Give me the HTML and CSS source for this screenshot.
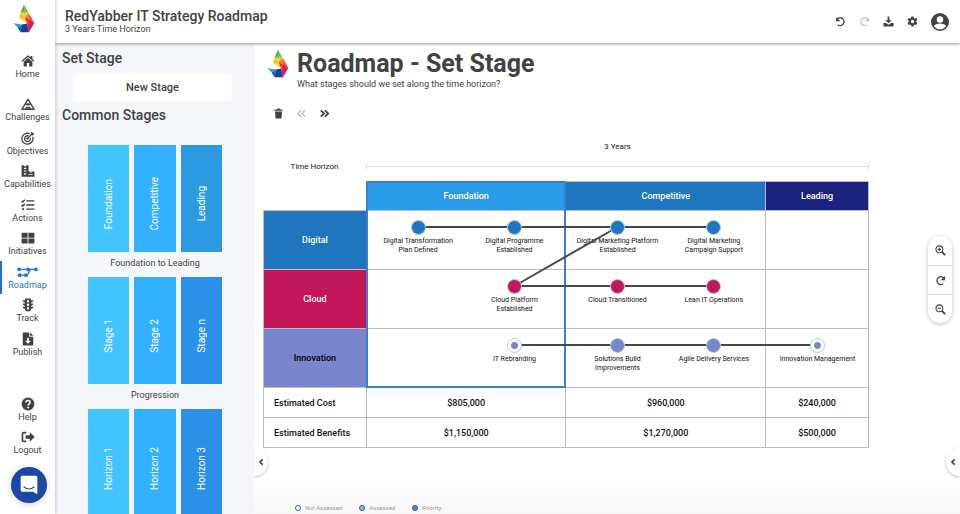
FILE: index.html
```html
<!DOCTYPE html>
<html lang="en">
<head>
    <meta charset="UTF-8">
    <meta name="viewport" content="width=device-width, initial-scale=1.0">
    <title>RedYabber IT Strategy Roadmap</title>
    <link rel="stylesheet" href="styles.css">
</head>
<body>
    <svg class="defs" width="0" height="0" aria-hidden="true">
        <symbol id="logo" viewBox="0 0 66 86">
            <path fill="#3fae49" d="M33 1 22 27 34 20z"/>
            <path fill="#5dbb46" d="M33 1 34 20 46 26z"/>
            <path fill="#8cc63f" d="M34 20 22 27 46 26z"/>
            <path fill="#ffd21f" d="M22 27 46 26 35 40z"/>
            <path fill="#fdb515" d="M22 27 19 42 35 40z"/>
            <path fill="#ffe11a" d="M19 42 35 40 42 57z"/>
            <path fill="#f58220" d="M46 26 35 40 49 44z"/>
            <path fill="#f0442e" d="M46 26 64 56 49 44z"/>
            <path fill="#ee2d3a" d="M35 40 49 44 42 57z"/>
            <path fill="#e0203c" d="M49 44 64 56 42 57z"/>
            <path fill="#d81b4a" d="M64 56 48 84 42 57z"/>
            <path fill="#2b9fe0" d="M1 57 27 61 14 70z"/>
            <path fill="#1763b8" d="M27 61 14 70 22 84z"/>
            <path fill="#1b3f94" d="M27 61 42 58 48 84 22 84z"/>
        </symbol>
        <symbol id="home" viewBox="0 0 24 24">
            <path d="M12 2 1 11.500l1.500 1.800L12 5.200l9.500 8.100 1.500-1.800-3.500-3V3.500h-3v2.400z"/>
            <path d="M12 7 4.500 13.400V21.500h5.500v-6h4v6h5.500v-8.100z"/>
        </symbol>
        <symbol id="challenges" viewBox="0 0 24 24">
            <path fill="none" stroke="currentColor" stroke-width="2.400" stroke-linejoin="round" d="M12 4 1.500 21h21zM8 11.500l2.500 2 1.500-2 1.500 2 2.500-2"/>
            <path d="m6 20 4.500-4 1.500 2 2-2 4 4z"/>
        </symbol>
        <symbol id="objectives" viewBox="0 0 24 24">
            <g fill="none" stroke="currentColor" stroke-width="2.200">
                <path d="M15 4.500A9.500 9.500 0 1 0 20 10"/>
                <path d="M13 8.500a5 5 0 1 0 3 3.500M11 13l10-10M18 2v4h4"/>
            </g>
            <circle cx="11" cy="13" r="2"/>
        </symbol>
        <symbol id="capabilities" viewBox="0 0 24 24">
            <path fill-rule="evenodd" d="M1 2h4v2h4V2h4v11h3v2h2v-2h5v9H1zM5 6.500v2h4v-2zM5 11v2h4v-2zM5 16v2h4v-2zM13 17.500v1.500h7v-1.500z"/>
        </symbol>
        <symbol id="actions" viewBox="0 0 24 24">
            <path fill="none" stroke="currentColor" stroke-width="2.400" d="M9 5h14M9 12h14M9 19h14M1 5l2 2 3.500-4M1 12l2 2 3.500-4"/>
            <circle cx="3.500" cy="19" r="1.900"/>
        </symbol>
        <symbol id="initiatives" viewBox="0 0 24 24">
            <path d="M1 3h10.300v8.500H1zM12.700 3H23v8.500H12.700zM1 12.800h10.300v8.500H1zM12.700 12.800H23v8.500H12.700z"/>
        </symbol>
        <symbol id="roadmap" viewBox="0 0 40 24">
            <path fill="none" stroke="currentColor" stroke-width="2.600" d="M4 7h32M5 18h12c7 0 4-8 9-11"/>
            <circle cx="4" cy="7" r="3.600"/><circle cx="21" cy="7" r="3.600"/><circle cx="36" cy="7" r="3.600"/>
            <circle cx="5" cy="18" r="3.600"/><circle cx="17" cy="18" r="3.600"/>
        </symbol>
        <symbol id="track" viewBox="0 0 24 24">
            <path fill-rule="evenodd" d="M7 1h10v3h4c0 2-1.500 3.500-4 4v1.500h4c0 2-1.500 3.500-4 4V15h4c0 2-1.500 3.500-4 4a5 4 0 0 1-10 0c-2.500-.5-4-2-4-4h4v-1.500c-2.500-.5-4-2-4-4h4V8C4.500 7.500 3 6 3 4h4zM12 3.500a2 2 0 1 0 0 4 2 2 0 0 0 0-4zM12 9.500a2 2 0 1 0 0 4 2 2 0 0 0 0-4zM12 15.500a2 2 0 1 0 0 4 2 2 0 0 0 0-4z"/>
        </symbol>
        <symbol id="publish" viewBox="0 0 24 24">
            <path fill-rule="evenodd" d="M3 1h11v7h7v15H3zM15.500 1 21 6.500h-5.500zM10.500 10v5H7l5 5 5-5h-3.500v-5z"/>
        </symbol>
        <symbol id="help" viewBox="0 0 24 24">
            <circle cx="12" cy="12" r="11"/>
            <path fill="none" stroke="#fff" stroke-width="2.600" d="M8.300 9.500c0-5 7.400-4.600 7.400-.5 0 2.700-3.500 2.700-3.500 5.500"/>
            <circle cx="12.200" cy="17.800" r="1.700" fill="#fff"/>
        </symbol>
        <symbol id="logout" viewBox="0 0 24 24">
            <path fill="none" stroke="currentColor" stroke-width="2.800" d="M9 4.500H4.500q-2 0-2 2v11q0 2 2 2H9"/>
            <path d="M15 4v5H8v6h7v5l8.500-8z"/>
        </symbol>
        <symbol id="rewind" viewBox="0 0 24 24">
            <path fill="none" stroke="currentColor" stroke-width="3" d="M5 6.500A8.500 8.500 0 1 1 6 19"/>
            <path d="M2 2v9.500h9.500z"/>
        </symbol>
        <symbol id="download" viewBox="0 0 24 24">
            <path d="M10 1h4v8h5l-7 7-7-7h5z"/>
            <path d="M1 15h5.500l5.500 4 5.500-4H23v8H1z"/>
        </symbol>
        <symbol id="settings" viewBox="0 0 24 24">
            <path fill-rule="evenodd" d="m9.500 1-.6 3.200-2 1.200-3.100-1.100-2.500 4.300L3.800 10.800v2.400l-2.500 2.200 2.500 4.300 3.100-1.100 2 1.200.6 3.200h5l.6-3.200 2-1.200 3.100 1.100 2.500-4.300-2.500-2.200v-2.400l2.500-2.200-2.500-4.300-3.100 1.100-2-1.200-.6-3.200zM12 8.300a3.700 3.700 0 1 1 0 7.400 3.700 3.700 0 0 1 0-7.400z"/>
        </symbol>
        <symbol id="account" viewBox="0 0 24 24">
            <circle cx="12" cy="12" r="12"/>
            <circle cx="12" cy="8.700" r="4.300" fill="#fff"/>
            <path fill="#fff" d="M3.800 17.500c2-4.500 14.400-4.500 16.400 0-4 5.500-12.400 5.500-16.400 0z"/>
        </symbol>
        <symbol id="trash" viewBox="0 0 24 24">
            <path d="M3 3h5l1.500-2h5L16 3h5v3H3zM4.500 7.500h15L18.500 23h-13z"/>
        </symbol>
        <symbol id="left" viewBox="0 0 24 24">
            <path fill="none" stroke="currentColor" stroke-width="3.500" d="m11 5-7 7 7 7M20 5l-7 7 7 7"/>
        </symbol>
        <symbol id="right" viewBox="0 0 24 24">
            <path fill="none" stroke="currentColor" stroke-width="4" d="m4 5 7 7-7 7M13 5l7 7-7 7"/>
        </symbol>
        <symbol id="chevron" viewBox="0 0 24 24">
            <path fill="none" stroke="currentColor" stroke-width="5" d="m17 4-8 8 8 8"/>
        </symbol>
        <symbol id="zoom-in" viewBox="0 0 24 24">
            <g fill="none" stroke="currentColor" stroke-width="2.400"><circle cx="9.500" cy="9.500" r="7.500"/><path d="M9.500 6v7M6 9.500h7"/><path stroke-width="4" d="m15 15 7 7"/></g>
        </symbol>
        <symbol id="zoom-out" viewBox="0 0 24 24">
            <g fill="none" stroke="currentColor" stroke-width="2.400"><circle cx="9.500" cy="9.500" r="7.500"/><path d="M6 9.500h7"/><path stroke-width="4" d="m15 15 7 7"/></g>
        </symbol>
        <symbol id="chat" viewBox="0 0 24 24">
            <path fill="#fff" d="M4 1h16q2 0 2 2v20l-5-3H4q-2 0-2-2V3q0-2 2-2z"/>
            <path fill="none" stroke="#1b47a8" stroke-width="1.500" stroke-linecap="round" d="M6 14.500c3.500 2.800 8.500 2.800 12 0"/>
        </symbol>
    </svg>

    <aside class="sidebar">
        <svg class="logo"><use href="#logo"/></svg>
        <nav class="nav">
            <a class="nav-item" href="#"><svg class="icon"><use href="#home"/></svg>Home</a>
            <div class="nav-group">
                <a class="nav-item" href="#"><svg class="icon"><use href="#challenges"/></svg>Challenges</a>
                <a class="nav-item" href="#"><svg class="icon"><use href="#objectives"/></svg>Objectives</a>
                <a class="nav-item" href="#"><svg class="icon"><use href="#capabilities"/></svg>Capabilities</a>
                <a class="nav-item" href="#"><svg class="icon"><use href="#actions"/></svg>Actions</a>
                <a class="nav-item" href="#"><svg class="icon"><use href="#initiatives"/></svg>Initiatives</a>
                <a class="nav-item active" href="#"><svg class="icon wide"><use href="#roadmap"/></svg>Roadmap</a>
                <a class="nav-item" href="#"><svg class="icon"><use href="#track"/></svg>Track</a>
                <a class="nav-item" href="#"><svg class="icon"><use href="#publish"/></svg>Publish</a>
            </div>
            <div class="nav-bottom">
                <a class="nav-item" href="#"><svg class="icon"><use href="#help"/></svg>Help</a>
                <a class="nav-item" href="#"><svg class="icon"><use href="#logout"/></svg>Logout</a>
            </div>
        </nav>
        <button class="chat" aria-label="Open chat"><svg><use href="#chat"/></svg></button>
    </aside>

    <div class="page">
        <header class="header">
            <div>
                <h2 class="title">RedYabber IT Strategy Roadmap</h2>
                <p class="subtitle">3 Years Time Horizon</p>
            </div>
            <div class="header-actions">
                <button class="icon-btn" aria-label="Undo"><svg><use href="#rewind"/></svg></button>
                <button class="icon-btn flip" aria-label="Redo" disabled><svg><use href="#rewind"/></svg></button>
                <button class="icon-btn" aria-label="Download"><svg><use href="#download"/></svg></button>
                <button class="icon-btn" aria-label="Settings"><svg><use href="#settings"/></svg></button>
                <button class="icon-btn account" aria-label="Account"><svg><use href="#account"/></svg></button>
            </div>
        </header>

        <div class="content">
            <section class="panel">
                <h3>Set Stage</h3>
                <button class="new-stage">New Stage</button>
                <h3>Common Stages</h3>
                <div class="stage-sets">
                    <div class="stage-set">
                        <div class="bars">
                            <div class="bar light"><span>Foundation</span></div>
                            <div class="bar mid"><span>Competitive</span></div>
                            <div class="bar steel"><span>Leading</span></div>
                        </div>
                        <p>Foundation to Leading</p>
                    </div>
                    <div class="stage-set">
                        <div class="bars">
                            <div class="bar light"><span>Stage 1</span></div>
                            <div class="bar mid"><span>Stage 2</span></div>
                            <div class="bar dark"><span>Stage n</span></div>
                        </div>
                        <p>Progression</p>
                    </div>
                    <div class="stage-set">
                        <div class="bars">
                            <div class="bar light"><span>Horizon 1</span></div>
                            <div class="bar mid"><span>Horizon 2</span></div>
                            <div class="bar dark"><span>Horizon 3</span></div>
                        </div>
                    </div>
                </div>
            </section>

            <main class="canvas">
                <div class="heading">
                    <svg class="logo"><use href="#logo"/></svg>
                    <div>
                        <h1>Roadmap - Set Stage</h1>
                        <p>What stages should we set along the time horizon?</p>
                    </div>
                </div>
                <div class="toolbar">
                    <button class="icon-btn" aria-label="Delete"><svg><use href="#trash"/></svg></button>
                    <button class="icon-btn" aria-label="Move left" disabled><svg><use href="#left"/></svg></button>
                    <button class="icon-btn" aria-label="Move right"><svg><use href="#right"/></svg></button>
                </div>

                <div class="chart">
                    <div class="horizon">
                        <span class="years">3 Years</span>
                        <span class="horizon-label">Time Horizon</span>
                        <span class="ruler"></span>
                    </div>
                    <div class="board">
                        <table>
                            <colgroup><col class="narrow"><col class="broad"><col class="broad"><col class="narrow"></colgroup>
                            <thead>
                                <tr><td class="corner"></td><th class="foundation">Foundation</th><th class="competitive">Competitive</th><th class="leading">Leading</th></tr>
                            </thead>
                            <tbody>
                                <tr><th class="digital">Digital</th><td></td><td></td><td></td></tr>
                                <tr><th class="cloud">Cloud</th><td></td><td></td><td></td></tr>
                                <tr><th class="innovation">Innovation</th><td></td><td></td><td></td></tr>
                            </tbody>
                            <tfoot>
                                <tr><th>Estimated Cost</th><td>$805,000</td><td>$960,000</td><td>$240,000</td></tr>
                                <tr><th>Estimated Benefits</th><td>$1,150,000</td><td>$1,270,000</td><td>$500,000</td></tr>
                            </tfoot>
                        </table>
                        <div class="selection"></div>
                        <div class="node digital c1 r1"><i></i>Digital Transformation<br>Plan Defined</div>
                        <div class="node digital c2 r1"><i></i>Digital Programme<br>Established</div>
                        <div class="node digital c3 r1"><i></i>Digital Marketing Platform<br>Established</div>
                        <div class="node digital c4 r1"><i></i>Digital Marketing<br>Campaign Support</div>
                        <div class="node cloud c2 r2"><i></i>Cloud Platform<br>Established</div>
                        <div class="node cloud c3 r2"><i></i>Cloud Transitioned</div>
                        <div class="node cloud c4 r2"><i></i>Lean IT Operations</div>
                        <div class="node open c2 r3"><i></i>IT Rebranding</div>
                        <div class="node innovation c3 r3"><i></i>Solutions Build<br>Improvements</div>
                        <div class="node innovation c4 r3"><i></i>Agile Delivery Services</div>
                        <div class="node open c5 r3"><i></i>Innovation Management</div>
                        <svg class="links">
                            <line x1="25.6%" y1="46" x2="74.4%" y2="46"/>
                            <line x1="41.5%" y1="105" x2="58.5%" y2="46"/>
                            <line x1="41.5%" y1="105" x2="74.4%" y2="105"/>
                            <line x1="41.5%" y1="164" x2="91.5%" y2="164"/>
                        </svg>
                    </div>
                </div>

                <div class="legend">
                    <span><i></i>Not Assessed</span>
                    <span><i class="assessed"></i>Assessed</span>
                    <span><i class="priority"></i>Priority</span>
                </div>

                <button class="tab tab-left" aria-label="Collapse panel"><svg><use href="#chevron"/></svg></button>
                <button class="tab tab-right" aria-label="Open details"><svg><use href="#chevron"/></svg></button>
                <div class="zoom">
                    <button aria-label="Zoom in"><svg><use href="#zoom-in"/></svg></button>
                    <button class="flip" aria-label="Reset zoom"><svg><use href="#rewind"/></svg></button>
                    <button aria-label="Zoom out"><svg><use href="#zoom-out"/></svg></button>
                </div>
            </main>
        </div>
    </div>
</body>
</html>
```
FILE: styles.css
```css
* {
    box-sizing: border-box;
}
body {
    display: flex;
    height: 100vh;
    margin: 0;
    overflow: hidden;
    font-family: Roboto, Arial, sans-serif;
    font-size: 9px;
    color: #424242;
    background: #fff;
}
h1, h2, h3, p {
    margin: 0;
}
svg {
    display: block;
    fill: currentColor;
}
.defs {
    position: absolute;
}
button {
    padding: 0;
    border: none;
    background: none;
    font-family: inherit;
    color: #424242;
    cursor: pointer;
}
.logo {
    width: 22px;
    height: 29px;
}

/* Sidebar */
.sidebar {
    display: flex;
    flex-direction: column;
    align-items: center;
    flex: none;
    width: 55px;
    padding: 4px 0 11px;
    background: #fff;
    box-shadow: 0 0 4px rgba(0, 0, 0, 0.3);
    z-index: 3;
}
.sidebar .logo {
    margin-right: 7px;
}
.nav {
    display: flex;
    flex-direction: column;
    flex: 1;
    width: 100%;
    padding: 17px 0 8px;
}
.nav-item {
    display: block;
    padding: 4px 0 3px;
    line-height: 12px;
    text-align: center;
    text-decoration: none;
    color: #424242;
}
.nav-item.active {
    color: #1f76d2;
    box-shadow: inset 2px 0 #1f6fd0;
}
.icon {
    width: 14px;
    height: 14px;
    margin: 0 auto;
}
.icon.wide {
    width: 21px;
}
.nav-group {
    display: grid;
    min-height: 268px;
    margin-top: 10px;
}
.nav-bottom {
    margin-top: auto;
}
.chat {
    display: flex;
    align-items: center;
    justify-content: center;
    width: 36px;
    height: 36px;
    margin-left: 3px;
    border-radius: 50%;
    background: #1b47a8;
    box-shadow: 0 1px 6px rgba(0, 0, 0, 0.2);
}
.chat svg {
    width: 20px;
    height: 20px;
}

/* Header */
.page {
    display: flex;
    flex-direction: column;
    flex: 1;
    min-width: 0;
}
.header {
    display: flex;
    align-items: center;
    justify-content: space-between;
    flex: none;
    height: 43px;
    padding: 0 11px 0 10px;
    background: #fff;
    box-shadow: 0 1px 3px rgba(0, 0, 0, 0.4);
    z-index: 2;
}
.title {
    font-size: 14px;
    font-weight: 500;
    line-height: 16px;
}
.subtitle {
    line-height: 11px;
}
.header-actions {
    display: flex;
    align-items: center;
    gap: 13px;
}
.icon-btn svg {
    width: 11px;
    height: 11px;
}
.icon-btn:disabled {
    color: #c4c4c4;
}
.flip svg {
    transform: scaleX(-1);
}
.account svg {
    width: 18px;
    height: 18px;
}

/* Stage panel */
.content {
    display: flex;
    flex: 1;
    min-height: 0;
}
.panel {
    flex: none;
    width: 199px;
    padding: 7px;
    overflow: hidden;
    background: #f4f6f9;
}
.panel h3 {
    font-size: 14px;
    font-weight: 500;
    line-height: 16px;
}
.new-stage {
    display: block;
    width: 159px;
    height: 28px;
    margin: 7px auto 6px 11px;
    background: #fff;
    font-size: 11px;
    font-weight: 500;
}
.stage-sets {
    padding: 22px 25px 0 26px;
}
.bars {
    display: grid;
    grid-template-columns: repeat(3, 1fr);
    gap: 5px;
    height: 107px;
}
.bar {
    display: flex;
    align-items: center;
    justify-content: center;
    padding-top: 11px;
    color: #fff;
    font-size: 10px;
}
.bar span {
    writing-mode: vertical-rl;
    transform: rotate(180deg);
}
.light {
    background: #41c4ff;
}
.mid {
    background: #33b0ff;
}
.steel {
    background: #2b9ae2;
}
.dark {
    background: #2a90e8;
}
.stage-set p {
    line-height: 11px;
    padding: 6px 0 8px;
    text-align: center;
}

/* Canvas */
.canvas {
    position: relative;
    display: flex;
    flex-direction: column;
    flex: 1;
    min-width: 0;
    background: linear-gradient(#fff 92%, #f8f8f8);
}
.heading {
    display: flex;
    gap: 8px;
    padding: 6px 13px 0;
}
.heading h1 {
    font-size: 25px;
    line-height: 29px;
}
.heading p {
    line-height: 12px;
}
.toolbar {
    display: flex;
    gap: 12px;
    padding: 18px 19px 0;
}
.chart {
    padding: 17px 91px 0 9px;
}
.horizon {
    display: grid;
    grid-template-columns: 17% 83%;
    grid-template-rows: 20px 20px;
    align-items: center;
    text-align: center;
    font-size: 8px;
    color: #111;
}
.years {
    grid-column: 2;
}
.ruler {
    height: 5px;
    border: solid #d8d8d8;
    border-width: 0 1px;
    background: linear-gradient(#d8d8d8, #d8d8d8) center / 100% 1px no-repeat;
}
.board {
    position: relative;
    padding-top: 5px;
}
table {
    width: 100%;
    table-layout: fixed;
    border-collapse: collapse;
    color: #111;
}
.narrow {
    width: 17%;
}
.broad {
    width: 33%;
}
th, td {
    height: 30px;
    padding: 0;
    border: 1px solid #bdbdbd;
    text-align: center;
    font-weight: 500;
}
thead th, thead td {
    height: 29px;
    color: #fff;
}
tbody th, tbody td {
    height: 59px;
}
tfoot th {
    padding-left: 10px;
    text-align: left;
}
td.corner {
    border-width: 0;
}
.foundation {
    background: #2a9be6;
}
.competitive {
    background: #1f76be;
}
.leading {
    background: #1a227e;
}
th.digital {
    background: #1f76be;
    color: #fff;
}
th.cloud {
    background: #c2185b;
    color: #fff;
}
th.innovation {
    background: #7986cb;
    color: #000;
}
.selection {
    position: absolute;
    top: 5px;
    left: 17%;
    width: 33%;
    height: 207px;
    border: 2px solid #3a7fc8;
}
.node {
    position: absolute;
    width: 110px;
    margin-left: -55px;
    font-size: 7px;
    line-height: 9px;
    text-align: center;
    color: #111;
}
.node i {
    display: block;
    width: 15px;
    height: 15px;
    margin: 0 auto 2px;
    border: 1px solid #b5cbe0;
    border-radius: 50%;
    position: relative;
    z-index: 1;
}
.node.digital i {
    background: #1f76be;
}
.node.cloud i {
    background: #c2185b;
}
.node.innovation i {
    background: #7986cb;
}
.node.open i {
    background: radial-gradient(#7986cb 3px, #fff 4px);
}
.c1 {
    left: 25.6%;
}
.c2 {
    left: 41.5%;
}
.c3 {
    left: 58.5%;
}
.c4 {
    left: 74.4%;
}
.c5 {
    left: 91.5%;
}
.r1 {
    top: 44px;
}
.r2 {
    top: 103px;
}
.r3 {
    top: 162px;
}
.links {
    position: absolute;
    top: 5px;
    left: 0;
    width: 100%;
    height: 207px;
    stroke: #484848;
    stroke-width: 2;
}
.legend {
    display: flex;
    gap: 17px;
    margin-top: auto;
    padding: 0 41px 2px;
    font-size: 6px;
    line-height: 8px;
    color: #999;
}
.legend span {
    display: flex;
    align-items: center;
    gap: 4px;
}
.legend i {
    width: 6px;
    height: 6px;
    border: 1px solid #2f5cae;
    border-radius: 50%;
}
.legend .assessed {
    background: #9db7e0;
}
.legend .priority {
    background: #5f83c4;
}

/* Floating controls */
.tab {
    position: absolute;
    bottom: 38px;
    width: 14px;
    height: 28px;
    background: #fff;
    box-shadow: 0 1px 3px rgba(0, 0, 0, 0.25);
}
.tab svg {
    width: 8px;
    height: 8px;
    margin: 0 auto;
}
.tab-left {
    left: 0;
    border-radius: 0 14px 14px 0;
    clip-path: inset(-4px -4px -4px 0);
}
.tab-right {
    right: 0;
    border-radius: 14px 0 0 14px;
}
.zoom {
    position: absolute;
    top: 193px;
    right: 8px;
    width: 24px;
    border-radius: 12px;
    background: #fff;
    box-shadow: 0 1px 4px rgba(0, 0, 0, 0.25);
}
.zoom button {
    display: block;
    width: 100%;
    height: 29px;
}
.zoom button + button {
    border-top: 1px solid #ddd;
}
.zoom svg {
    width: 11px;
    height: 11px;
    margin: 0 auto;
}
```
